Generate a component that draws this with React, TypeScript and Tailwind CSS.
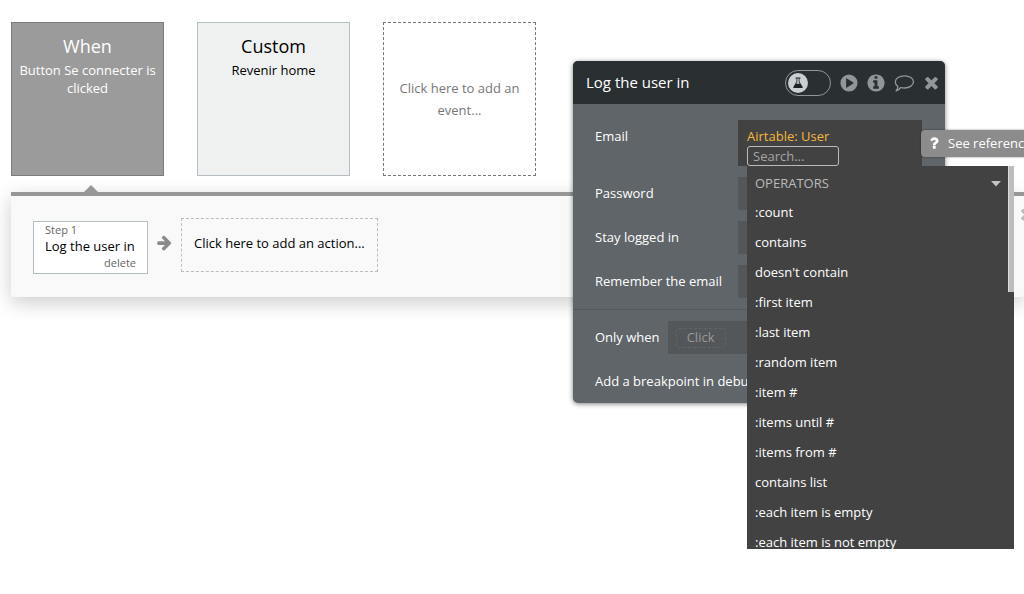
import { useState } from "react";

const OPERATORS = [
  ":count",
  "contains",
  "doesn't contain",
  ":first item",
  ":last item",
  ":random item",
  ":item #",
  ":items until #",
  ":items from #",
  "contains list",
  ":each item is empty",
  ":each item is not empty",
];

const ICONS = {
  close:
    "M1490 1322q0 40-28 68l-136 136q-28 28-68 28t-68-28l-294-294-294 294q-28 28-68 28t-68-28l-136-136q-28-28-28-68t28-68l294-294-294-294q-28-28-28-68t28-68l136-136q28-28 68-28t68 28l294 294 294-294q28-28 68-28t68 28l136 136q28 28 28 68t-28 68l-294 294 294 294q28 28 28 68z",
  arrow:
    "M1600 960q0 54-37 91l-651 651q-39 37-91 37-51 0-90-37l-75-75q-38-38-38-91t38-91l293-293h-704q-52 0-84.500-37.500t-32.500-90.500v-128q0-53 32.500-90.500t84.500-37.500h704l-293-294q-38-36-38-90t38-90l75-75q38-38 90-38 53 0 91 38l651 651q37 35 37 90z",
  info: "M1152 1376v-160q0-14-9-23t-23-9h-96v-512q0-14-9-23t-23-9h-320q-14 0-23 9t-9 23v160q0 14 9 23t23 9h96v320h-96q-14 0-23 9t-9 23v160q0 14 9 23t23 9h448q14 0 23-9t9-23zm-128-896v-160q0-14-9-23t-23-9h-192q-14 0-23 9t-9 23v160q0 14 9 23t23 9h192q14 0 23-9t9-23zm640 416q0 209-103 385.500t-279.500 279.500-385.500 103-385.500-103-279.500-279.500-103-385.500 103-385.500 279.500-279.500 385.500-103 385.500 103 279.500 279.500 103 385.500z",
  play: "M896 128a768 768 0 1 0 0 1536a768 768 0 1 0 0-1536zM640 500q0-40 40-20l600 380q40 36 0 72l-600 380q-40 20-40-20z",
  question:
    "M1088 1256v240q0 16-12 28t-28 12h-240q-16 0-28-12t-12-28v-240q0-16 12-28t28-12h240q16 0 28 12t12 28zm316-600q0 54-15.500 101t-35 76.500-55 59.500-57.500 43.500-61 35.500q-41 23-68.500 65t-27.500 67q0 17-12 32.500t-28 15.500h-240q-15 0-25.500-18.500t-10.500-37.500v-45q0-83 65-156.500t143-108.500q59-27 84-56t25-76q0-42-46.500-74t-107.500-32q-65 0-108 29-35 25-107 115-13 16-31 16-12 0-25-8l-164-125q-13-10-15.500-25t5.500-28q160-266 464-266 80 0 161 31t146 83 106 127.500 41 158.500z",
};

interface IconProps {
  name: keyof typeof ICONS;
  className?: string;
}

function Icon({ name, className }: IconProps) {
  return (
    <svg viewBox="0 0 1792 1792" className={className} fill="currentColor" fillRule="evenodd" aria-hidden="true">
      <path d={ICONS[name]} />
    </svg>
  );
}

function EventCards() {
  return (
    <div className="flex gap-[33px] pl-[11px] pt-[22px] text-center">
      <button className="flex h-[154px] w-[153px] shrink-0 flex-col items-center border border-[#7c7c7c] bg-[#9b9b9b] px-1 pt-[10px] text-white">
        <span className="text-[18px] leading-[26px]">When</span>
        <span className="mt-[2px] text-[13px] leading-[18px]">Button Se connecter is clicked</span>
      </button>
      <button className="flex h-[154px] w-[153px] shrink-0 flex-col items-center border border-[#b5bfc3] bg-[#eff1f0] px-1 pt-[10px] text-black">
        <span className="text-[18px] leading-[26px]">Custom</span>
        <span className="mt-[2px] text-[13px] leading-[18px]">Revenir home</span>
      </button>
      <button className="h-[154px] w-[153px] shrink-0 border border-dashed border-[#777] px-3 text-[13px] leading-[22px] text-[#777]">
        Click here to add an event...
      </button>
    </div>
  );
}

function ActionsPanel() {
  return (
    <section className="relative ml-[11px] mt-4 rounded-b-[3px] border-t-4 border-[#979797] bg-[#f9f9f9] shadow-[0_6px_20px_rgba(0,0,0,0.2)]">
      <svg viewBox="0 0 16 8" className="absolute -top-[11px] left-[72px] h-2 w-4" fill="#979797" aria-hidden="true">
        <path d="M0 8L8 0l8 8z" />
      </svg>
      <div className="flex h-[101px] items-start pl-[22px] pt-[22px]">
        <div className="mt-[3px] flex h-[53px] w-[115px] flex-col border border-[#b5bfc3] bg-white px-[11px]">
          <span className="text-[11px] leading-[16px] text-[#666]">Step 1</span>
          <span className="whitespace-nowrap text-[13px] leading-[17px] text-black">Log the user in</span>
          <button className="self-end text-[11px] leading-[16px] text-[#666]">delete</button>
        </div>
        <Icon name="arrow" className="mx-2 mt-4 size-[17px] text-[#8a8a8a]" />
        <button className="h-[54px] border border-dashed border-[#b5bfc3] px-3 pb-[3px] text-[13px] text-black">
          Click here to add an action...
        </button>
      </div>
      <button aria-label="Close" className="absolute -right-3 top-[9px] text-[#b5bfc3]">
        <Icon name="close" className="size-[18px]" />
      </button>
    </section>
  );
}

function EditorHeader() {
  const [runAs, setRunAs] = useState(false);

  return (
    <header className="flex h-[43px] items-center bg-[#2a2f31] pl-[13px] pr-1 text-[#8f9799]">
      <h2 className="flex-1 text-[15px] text-white">Log the user in</h2>
      <button
        role="switch"
        aria-checked={runAs}
        aria-label="Test mode"
        onClick={() => setRunAs(!runAs)}
        className="mr-2 flex h-[26px] w-[46px] items-center rounded-full border border-[#8f9799] px-[2px]"
      >
        <svg viewBox="0 0 20 20" className="size-5" aria-hidden="true">
          <circle cx="10" cy="10" r="10" fill="#c9cfd2" />
          <path d="M7.500 4.500h5v1h-1v3.200l3.200 5.300q.3 1-.7 1H6q-1 0-.7-1l3.200-5.300V5.500h-1z" fill="#1d2224" />
          <path d="M9.300 5.500h1.400V9l1 1.700H8.300l1-1.700z" fill="#c9cfd2" />
        </svg>
      </button>
      <button aria-label="Play" className="mr-[7px]">
        <Icon name="play" className="size-5" />
      </button>
      <button aria-label="Info" className="mr-[7px]">
        <Icon name="info" className="size-5" />
      </button>
      <button aria-label="Comment" className="mr-[7px]">
        <svg viewBox="0 0 22 18" className="h-[18px] w-[22px]" fill="none" stroke="currentColor" strokeWidth="1.300" aria-hidden="true">
          <path d="M11.500 1.800c5.200 0 9 2.700 9 6s-3.800 6.200-9 6.200c-1.400 0-2.600-.1-3.700-.5-1 1.400-2.300 2.800-5 3.500 1.300-1.100 2-2.600 2-4.600C3 11.300 2.300 9.600 2.300 7.800c0-3.300 4-6 9.200-6z" />
        </svg>
      </button>
      <button aria-label="Close editor">
        <Icon name="close" className="size-[19px]" />
      </button>
    </header>
  );
}

function OperatorMenu() {
  return (
    <div className="absolute left-[174px] top-[105px] h-[383px] w-[267px] overflow-hidden bg-[#424242] pt-[2px]">
      <button className="flex h-[30px] w-full items-center justify-between pl-2 pr-[13px] pt-px font-medium text-[#bbb]">
        OPERATORS
        <svg viewBox="0 0 10 6" className="h-[6px] w-[10px]" fill="#c4c4c4" aria-hidden="true">
          <path d="M0 0h10L5 5.500z" />
        </svg>
      </button>
      <ul>
        {OPERATORS.map((op) => (
          <li key={op}>
            <button className="flex h-[30px] w-full items-center pl-2">{op}</button>
          </li>
        ))}
      </ul>
      <div className="absolute right-0 top-0 h-[126px] w-[6px] border-l border-[#ddd] bg-[#bdbdbd]" />
    </div>
  );
}

function PropertyEditor() {
  return (
    <div className="absolute left-[573px] top-[61px] w-[372px] text-[13px] text-white">
      <div className="overflow-hidden rounded-[5px] bg-[#5f6568] shadow-[0_1px_5px_rgba(0,0,0,0.5)]">
        <EditorHeader />
        <div className="flex flex-col gap-[11px] pb-[11px] pl-[22px] pr-[23px] pt-4">
          <div className="flex h-[46px] justify-between">
            <label htmlFor="email-search" className="leading-8">Email</label>
            <div className="w-[184px] bg-[#424242] pl-[9px] pt-[6px]">
              <div className="leading-5 text-[#f5b73d]">Airtable: User</div>
              <input
                id="email-search"
                type="text"
                placeholder="Search..."
                autoFocus
                className="block h-5 w-[92px] rounded-[3px] border border-[#bbb] pl-[5px] caret-white outline-none placeholder:text-[#a5a5a5]"
              />
            </div>
          </div>
          <div className="flex h-[33px] items-center justify-between">
            <label htmlFor="password">Password</label>
            <input id="password" type="password" className="h-full w-[184px] bg-[#53575a]" />
          </div>
          <div className="flex h-[33px] items-center justify-between">
            <label htmlFor="stay">Stay logged in</label>
            <input id="stay" type="text" className="h-full w-[184px] bg-[#53575a]" />
          </div>
          <div className="flex h-[33px] items-center justify-between">
            <label htmlFor="remember">Remember the email</label>
            <input id="remember" type="text" className="h-full w-[184px] bg-[#53575a]" />
          </div>
        </div>
        <div className="border-t border-[#54595c] pb-[5px] pl-[22px] pr-[23px] pt-[11px]">
          <div className="flex h-[33px] items-center gap-2">
            <span>Only when</span>
            <div className="flex h-full flex-1 items-center bg-[#53575a] pl-2">
              <button className="h-5 w-[50px] rounded-[3px] border border-dashed border-[#5f6467] pb-px leading-[17px] text-[#999]">
                Click
              </button>
            </div>
          </div>
          <div className="mt-[11px] h-[33px] leading-[33px]">Add a breakpoint in debug mode</div>
        </div>
      </div>
      <OperatorMenu />
      <button className="absolute left-[348px] top-[69px] flex h-[27px] items-center whitespace-nowrap rounded-[4px] bg-[#8c8c8c] pl-[5px] pr-3 shadow-[0_0_2px_rgba(0,0,0,0.5)]">
        <Icon name="question" className="mb-[2px] mr-[6px] size-4" />
        See reference
      </button>
    </div>
  );
}

export default function App() {
  return (
    <main className="relative min-h-screen overflow-hidden bg-white font-['Open_Sans',sans-serif]">
      <EventCards />
      <ActionsPanel />
      <PropertyEditor />
    </main>
  );
}
